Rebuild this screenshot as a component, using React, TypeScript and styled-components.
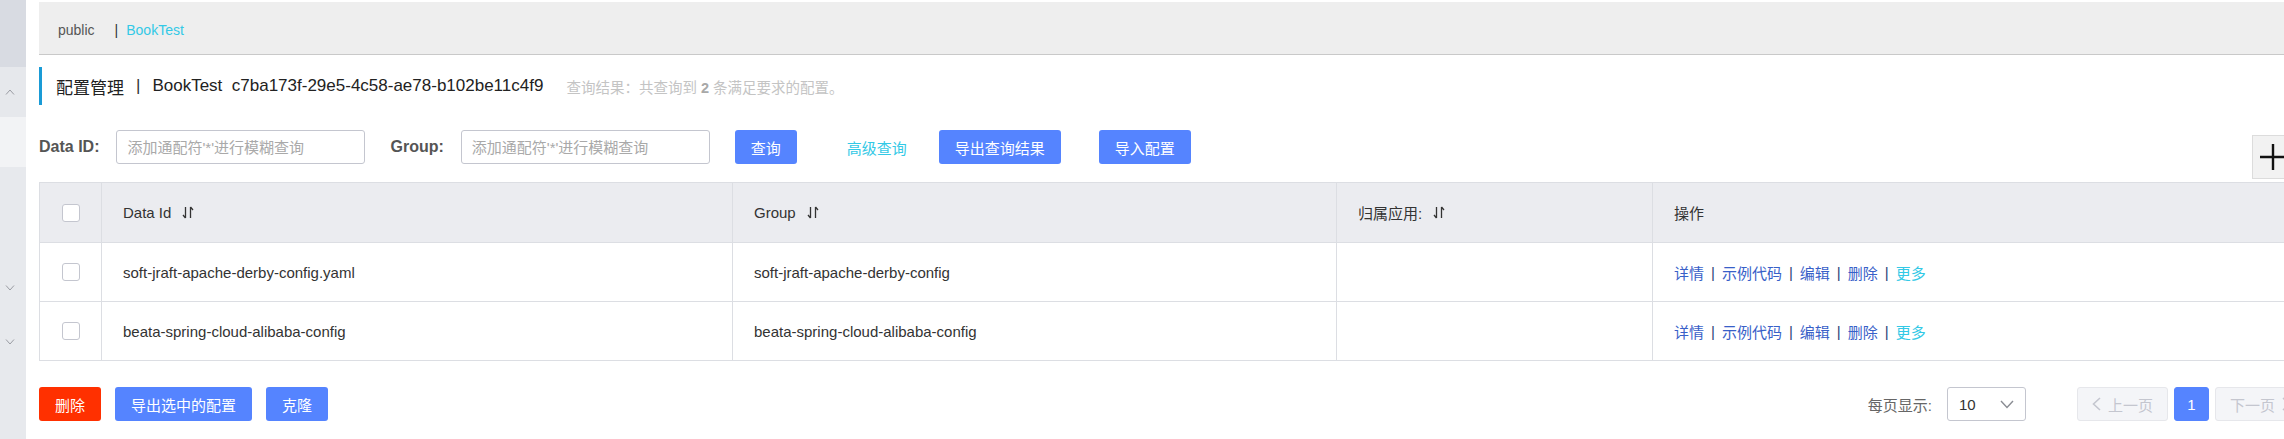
import React from 'react';
import styled, { createGlobalStyle } from 'styled-components';

const FONT = `"Liberation Sans", Arial, "Noto Sans CJK SC", sans-serif`;

const PRIMARY = '#5584ff';
const DANGER = '#ff3000';
const BORDER = '#dcdee3';
const INPUT_BORDER = '#c4c6cf';
const CYAN = '#33c9e6';
const LINK = '#3860c8';

const GlobalStyle = createGlobalStyle`
    html, body {
        margin: 0;
        padding: 0;
        overflow: hidden;
        background: #fff;
    }
    body {
        font-family: ${FONT};
        color: #333;
    }
    * {
        box-sizing: border-box;
    }
`;

const Page = styled.div`
    position: relative;
    display: flex;
    width: 2306px;
    height: 439px;
`;

const Sidebar = styled.div`
    width: 26px;
    flex-shrink: 0;
    display: flex;
    flex-direction: column;
    background: #e7e9ed;
`;

const SidebarBlock = styled.div<{ $bg?: string; $h: number }>`
    height: ${(p) => p.$h}px;
    background: ${(p) => p.$bg || 'transparent'};
    display: flex;
    align-items: center;
    padding-left: 5px;
`;

const Main = styled.div`
    margin-left: 13px;
    width: 2267px;
    flex-shrink: 0;
    display: flex;
    flex-direction: column;
`;

const Header = styled.div`
    margin-top: 2px;
    height: 53px;
    background: #eeeeee;
    border-bottom: 1px solid #c9c9c9;
    display: flex;
    align-items: center;
    padding: 3px 0 0 19px;
    font-size: 14px;
`;

const CrumbText = styled.span`
    color: #555;
`;

const CrumbDivider = styled.span`
    color: #333;
    margin: 0 8px 0 20px;
`;

const CrumbLink = styled.span`
    color: ${CYAN};
`;

const TitleBar = styled.div`
    margin-top: 12px;
    height: 38px;
    border-left: 3px solid #1a9bd6;
    padding-left: 14px;
    display: flex;
    align-items: center;
`;

const TitleText = styled.span`
    font-size: 17px;
    color: #222;
    white-space: pre;
`;

const TitleDivider = styled.span`
    font-size: 17px;
    color: #333;
    margin: 0 12px;
`;

const ResultText = styled.span`
    margin-left: 23px;
    font-size: 14.5px;
    color: #c4c4c4;

    b {
        color: #a8a8a8;
        margin: 0 4px;
    }
`;

const SearchRow = styled.div`
    margin-top: 25px;
    height: 34px;
    display: flex;
    align-items: center;
`;

const FieldLabel = styled.label`
    font-weight: bold;
    font-size: 16px;
    color: #555;
    margin-right: 17px;
`;

const SearchInput = styled.input<{ $mr?: number }>`
    width: 249px;
    height: 34px;
    border: 1px solid ${INPUT_BORDER};
    border-radius: 3px;
    padding: 0 10px;
    font-family: ${FONT};
    font-size: 15px;
    color: #333;
    margin-right: ${(p) => p.$mr ?? 0}px;
    outline: none;

    &::placeholder {
        color: #a9a9a9;
    }
`;

const Button = styled.button<{ $danger?: boolean; $mr?: number }>`
    height: 34px;
    padding: 0 16px;
    border: none;
    border-radius: 3px;
    background: ${(p) => (p.$danger ? DANGER : PRIMARY)};
    color: #fff;
    font-family: ${FONT};
    font-size: 15px;
    margin-right: ${(p) => p.$mr ?? 0}px;
    cursor: pointer;
`;

const TextLink = styled.a<{ $mr?: number }>`
    color: ${CYAN};
    font-size: 15px;
    margin-right: ${(p) => p.$mr ?? 0}px;
    cursor: pointer;
`;

const Table = styled.div`
    margin-top: 18px;
    border: 1px solid ${BORDER};
    border-bottom: none;
`;

const Row = styled.div<{ $head?: boolean; $h: number }>`
    display: grid;
    grid-template-columns: 62px 631px 604px 316px 1fr;
    height: ${(p) => p.$h}px;
    background: ${(p) => (p.$head ? '#ebecf0' : '#fff')};
    border-bottom: 1px solid ${BORDER};
`;

const Cell = styled.div<{ $center?: boolean }>`
    display: flex;
    align-items: center;
    justify-content: ${(p) => (p.$center ? 'center' : 'flex-start')};
    padding-left: ${(p) => (p.$center ? 0 : 21)}px;
    border-right: 1px solid ${BORDER};
    font-size: 15px;
    color: #333;
    white-space: nowrap;

    &:last-child {
        border-right: none;
    }
`;

const Checkbox = styled.span`
    width: 18px;
    height: 18px;
    border: 1px solid ${INPUT_BORDER};
    border-radius: 3px;
    background: #fff;
`;

const SortIcon = styled.svg`
    margin-left: 11px;
`;

const OpLink = styled.a<{ $more?: boolean }>`
    color: ${(p) => (p.$more ? CYAN : LINK)};
    cursor: pointer;
`;

const OpDivider = styled.span`
    color: #2b3f7a;
    margin: 0 7px;
`;

const Footer = styled.div`
    margin-top: 26px;
    height: 34px;
    display: flex;
    align-items: center;
    justify-content: space-between;
`;

const ButtonGroup = styled.div`
    display: flex;
    gap: 14px;
`;

const Pager = styled.div`
    display: flex;
    align-items: center;
`;

const PagerLabel = styled.span`
    font-size: 15px;
    color: #666;
    margin-right: 15px;
`;

const PageSizeSelect = styled.div`
    width: 79px;
    height: 34px;
    border: 1px solid ${INPUT_BORDER};
    border-radius: 3px;
    display: flex;
    align-items: center;
    justify-content: space-between;
    padding: 0 11px 0 11px;
    font-size: 15px;
    color: #333;
    margin-right: 51px;
`;

const PageButtons = styled.div`
    display: flex;
    gap: 6px;
`;

const PageButton = styled.div<{ $active?: boolean; $w: number }>`
    width: ${(p) => p.$w}px;
    height: 34px;
    border-radius: 3px;
    display: flex;
    align-items: center;
    justify-content: center;
    gap: 7px;
    font-size: 15px;
    background: ${(p) => (p.$active ? PRIMARY : '#f4f5f8')};
    border: 1px solid ${(p) => (p.$active ? PRIMARY : '#e6e7eb')};
    color: ${(p) => (p.$active ? '#fff' : '#c4c6cf')};
`;

const AddButton = styled.div`
    position: absolute;
    left: 2252px;
    top: 135px;
    width: 42px;
    height: 44px;
    background: #f2f2f2;
    border: 1px solid #dcdcdc;
    display: flex;
    align-items: center;
    justify-content: center;
`;

const Chevron = ({ up }: { up?: boolean }) => (
    <svg width="10" height="6" viewBox="0 0 10 6">
        <polyline
            points={up ? '1,5.5 5,1 9,5.5' : '1,0.5 5,5 9,0.5'}
            fill="none"
            stroke="#9a9ca3"
            strokeWidth="1"
        />
    </svg>
);

const Sort = () => (
    <SortIcon width="12" height="13" viewBox="0 0 12 13">
        <path d="M3.5 1v11M3.5 12L1 9" fill="none" stroke="#333" strokeWidth="1.3" />
        <path d="M8.5 12V1M8.5 1L11 4" fill="none" stroke="#333" strokeWidth="1.3" />
    </SortIcon>
);

const rows = [
    { dataId: 'soft-jraft-apache-derby-config.yaml', group: 'soft-jraft-apache-derby-config', h: 59 },
    { dataId: 'beata-spring-cloud-alibaba-config', group: 'beata-spring-cloud-alibaba-config', h: 59 },
];

const ops = ['详情', '示例代码', '编辑', '删除'];

const Ops = () => (
    <>
        {ops.map((op) => (
            <React.Fragment key={op}>
                <OpLink>{op}</OpLink>
                <OpDivider>|</OpDivider>
            </React.Fragment>
        ))}
        <OpLink $more>更多</OpLink>
    </>
);

export default function App() {
    return (
        <>
            <GlobalStyle />
            <Page>
                <Sidebar>
                    <SidebarBlock $h={67} $bg="#d8dbe2" />
                    <SidebarBlock $h={50} $bg="#e6e8ec">
                        <Chevron up />
                    </SidebarBlock>
                    <SidebarBlock $h={50} $bg="#f2f3f5" />
                    <SidebarBlock $h={94} />
                    <SidebarBlock $h={54}>
                        <Chevron />
                    </SidebarBlock>
                    <SidebarBlock $h={54}>
                        <Chevron />
                    </SidebarBlock>
                </Sidebar>

                <Main>
                    <Header>
                        <CrumbText>public</CrumbText>
                        <CrumbDivider>|</CrumbDivider>
                        <CrumbLink>BookTest</CrumbLink>
                    </Header>

                    <TitleBar>
                        <TitleText>配置管理</TitleText>
                        <TitleDivider>|</TitleDivider>
                        <TitleText>BookTest  c7ba173f-29e5-4c58-ae78-b102be11c4f9</TitleText>
                        <ResultText>
                            查询结果：共查询到<b>2</b>条满足要求的配置。
                        </ResultText>
                    </TitleBar>

                    <SearchRow>
                        <FieldLabel>Data ID:</FieldLabel>
                        <SearchInput $mr={25} placeholder="添加通配符'*'进行模糊查询" />
                        <FieldLabel>Group:</FieldLabel>
                        <SearchInput $mr={25} placeholder="添加通配符'*'进行模糊查询" />
                        <Button $mr={50}>查询</Button>
                        <TextLink $mr={32}>高级查询</TextLink>
                        <Button $mr={38}>导出查询结果</Button>
                        <Button>导入配置</Button>
                    </SearchRow>

                    <Table>
                        <Row $head $h={60}>
                            <Cell $center>
                                <Checkbox />
                            </Cell>
                            <Cell>
                                Data Id
                                <Sort />
                            </Cell>
                            <Cell>
                                Group
                                <Sort />
                            </Cell>
                            <Cell>
                                归属应用:
                                <Sort />
                            </Cell>
                            <Cell>操作</Cell>
                        </Row>
                        {rows.map((r) => (
                            <Row key={r.dataId} $h={r.h}>
                                <Cell $center>
                                    <Checkbox />
                                </Cell>
                                <Cell>{r.dataId}</Cell>
                                <Cell>{r.group}</Cell>
                                <Cell />
                                <Cell>
                                    <Ops />
                                </Cell>
                            </Row>
                        ))}
                    </Table>

                    <Footer>
                        <ButtonGroup>
                            <Button $danger>删除</Button>
                            <Button>导出选中的配置</Button>
                            <Button>克隆</Button>
                        </ButtonGroup>
                        <Pager>
                            <PagerLabel>每页显示:</PagerLabel>
                            <PageSizeSelect>
                                <span>10</span>
                                <svg width="14" height="9" viewBox="0 0 14 9">
                                    <polyline points="1,1 7,7.5 13,1" fill="none" stroke="#8a8c93" strokeWidth="1.4" />
                                </svg>
                            </PageSizeSelect>
                            <PageButtons>
                                <PageButton $w={91}>
                                    <svg width="9" height="14" viewBox="0 0 9 14">
                                        <polyline points="8,1 1.5,7 8,13" fill="none" stroke="#c4c6cf" strokeWidth="1.6" />
                                    </svg>
                                    上一页
                                </PageButton>
                                <PageButton $active $w={35}>1</PageButton>
                                <PageButton $w={91}>
                                    下一页
                                    <svg width="9" height="14" viewBox="0 0 9 14">
                                        <polyline points="1,1 7.5,7 1,13" fill="none" stroke="#c4c6cf" strokeWidth="1.6" />
                                    </svg>
                                </PageButton>
                            </PageButtons>
                        </Pager>
                    </Footer>
                </Main>

                <AddButton>
                    <svg width="26" height="26" viewBox="0 0 26 26">
                        <path d="M13 0v26M0 13h26" stroke="#111" strokeWidth="2.4" />
                    </svg>
                </AddButton>
            </Page>
        </>
    );
}
